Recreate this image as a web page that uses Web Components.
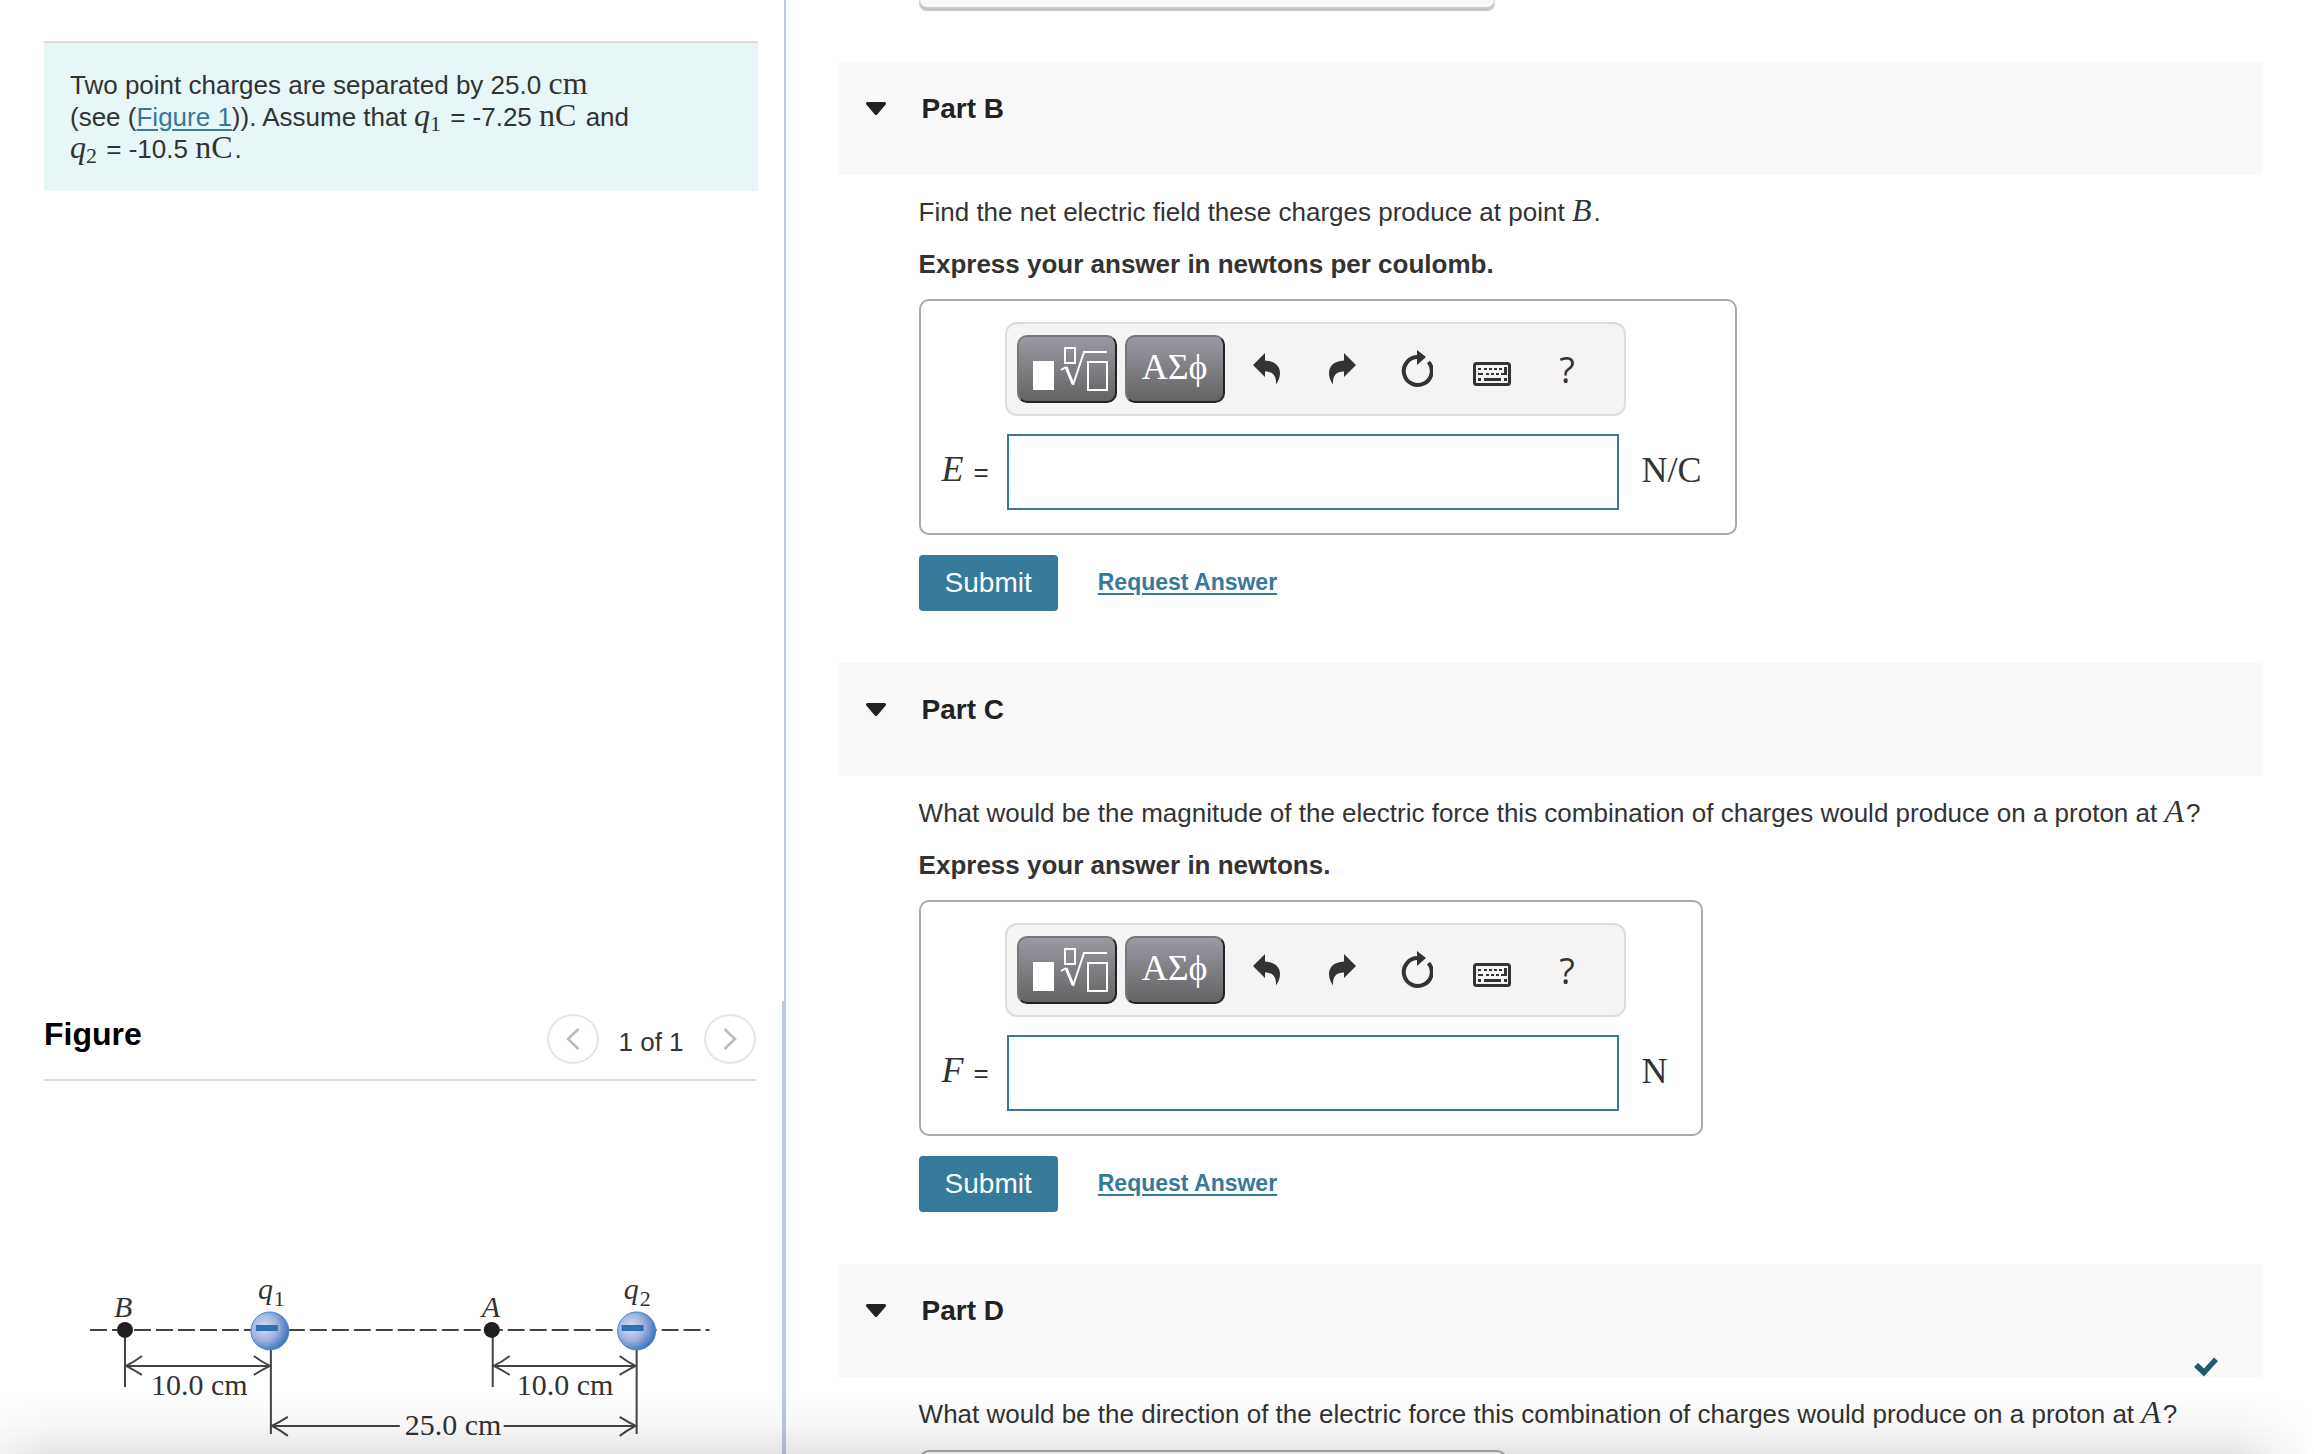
<!DOCTYPE html>
<html lang="en">
<head>
<meta charset="utf-8">
<title>Point charges</title>
<style>
  body {
    margin: 0;
    height: 100vh;
    overflow: hidden;
    background: #fff;
    color: #333;
    font: 26px/32px "Liberation Sans", Arial, sans-serif;
  }

  var, .unit {
    margin-right: 2px;
    font-family: "Liberation Serif", "Times New Roman", serif;
    font-size: 32px;
    line-height: 1px;
  }

  sub {
    font-size: 22px;
    font-style: normal;
    line-height: 1px;
    vertical-align: -5px;
  }

  a {
    color: #35799b;
    text-decoration-thickness: 2px;
    text-underline-offset: 3px;
  }
</style>
</head>
<body>

<problem-page>
  <problem-intro slot="intro">
    Two point charges are separated by 25.0 <span class="unit">cm</span><br>
    (see (<a href="#figure">Figure 1</a>)). Assume that <var>q<sub>1</sub></var> = -7.25 <span class="unit">nC</span> and<br>
    <var>q<sub>2</sub></var> = -10.5 <span class="unit">nC</span>.
  </problem-intro>

  <figure-panel slot="figure" id="figure" count="1 of 1">
    <span slot="title">Figure</span>
    <charge-diagram></charge-diagram>
  </figure-panel>

  <feedback-card></feedback-card>

  <problem-part>
    <span slot="title">Part B</span>
    <span slot="question">Find the net electric field these charges produce at point <var>B</var>.</span>
    <span slot="hint">Express your answer in newtons per coulomb.</span>
    <answer-box symbol="E" unit="N/C"></answer-box>
    <answer-actions></answer-actions>
  </problem-part>

  <problem-part>
    <span slot="title">Part C</span>
    <span slot="question">What would be the magnitude of the electric force this combination of charges would produce on a proton at <var>A</var>?</span>
    <span slot="hint">Express your answer in newtons.</span>
    <answer-box symbol="F" unit="N"></answer-box>
    <answer-actions></answer-actions>
  </problem-part>

  <problem-part done>
    <span slot="title">Part D</span>
    <span slot="question">What would be the direction of the electric force this combination of charges would produce on a proton at <var>A</var>?</span>
    <choice-box></choice-box>
  </problem-part>
</problem-page>

<script>
class ProblemPage extends HTMLElement {
  constructor() {
    super();
    this.attachShadow({ mode: 'open' });
    this.shadowRoot.innerHTML = `
      <style>
        :host {
          display: grid;
          grid-template-columns: 33.95% minmax(0, 1fr);
          height: 100vh;
          overflow: hidden;
        }

        aside {
          display: flex;
          flex-direction: column;
          min-height: 0;
        }

        #intro {
          flex: 1;
          padding: 41px 26px 0 44px;
          border-right: 2px solid #bccbdb;
        }

        #figure {
          padding: 0 26px 0 44px;
          border-right: 4px solid #bccbdb;
        }

        main {
          padding: 0 52px;
          min-height: 0;
        }

        /* shade that rises from the lower edge of the window */
        #shade {
          position: fixed;
          left: 0;
          right: 0;
          bottom: 0;
          height: 60px;
          background: linear-gradient(transparent, rgba(0, 0, 0, 0.03) 50%, rgba(0, 0, 0, 0.1));
          -webkit-mask-image: linear-gradient(90deg, rgba(0, 0, 0, 0.5), #000 50px, #000 calc(100% - 80px), transparent);
          mask-image: linear-gradient(90deg, rgba(0, 0, 0, 0.5), #000 50px, #000 calc(100% - 80px), transparent);
          pointer-events: none;
        }
      </style>
      <aside>
        <div id="intro"><slot name="intro"></slot></div>
        <div id="figure"><slot name="figure"></slot></div>
      </aside>
      <main><slot></slot></main>
      <div id="shade"></div>
    `;
  }
}

class ProblemIntro extends HTMLElement {
  constructor() {
    super();
    this.attachShadow({ mode: 'open' });
    this.shadowRoot.innerHTML = `
      <style>
        :host {
          display: block;
          padding: 26px;
          border-top: 2px solid #ddd;
          background: #e7f6f7;
        }
      </style>
      <slot></slot>
    `;
  }
}

class FigurePanel extends HTMLElement {
  constructor() {
    super();
    this.attachShadow({ mode: 'open' });
    this.shadowRoot.innerHTML = `
      <style>
        :host {
          display: block;
        }

        header {
          display: flex;
          align-items: center;
          justify-content: space-between;
          height: 78px;
          border-bottom: 2px solid #ddd;
        }

        h2 {
          margin: 0 0 12px;
          font-size: 32px;
          line-height: 36px;
          color: #000;
        }

        nav {
          display: flex;
          align-items: center;
          gap: 20px;
          margin-bottom: 2px;
        }

        nav span {
          padding-top: 6px;
        }

        button {
          display: flex;
          align-items: center;
          justify-content: center;
          width: 52px;
          height: 50px;
          padding: 0;
          border: 2px solid #e6e6e6;
          border-radius: 50%;
          background: #fff;
        }

        svg {
          fill: none;
          stroke: #bbb;
          stroke-width: 2.5;
        }
      </style>
      <header>
        <h2><slot name="title"></slot></h2>
        <nav>
          <button aria-label="Previous figure"><svg width="14" height="22"><path d="M12.5 1L2 11l10.500 10"/></svg></button>
          <span id="count"></span>
          <button aria-label="Next figure"><svg width="14" height="22"><path d="M1.500 1L12 11L1.500 21"/></svg></button>
        </nav>
      </header>
      <slot></slot>
    `;
    this.shadowRoot.querySelector('#count').textContent = this.getAttribute('count');
  }
}

class ChargeDiagram extends HTMLElement {
  constructor() {
    super();
    this.attachShadow({ mode: 'open' });
    this.shadowRoot.innerHTML = `
      <style>
        :host {
          display: block;
          padding-top: 173px;
        }

        svg {
          display: block;
          width: 100%;
          height: auto;
        }

        text {
          font-family: "Liberation Serif", "Times New Roman", serif;
          font-size: 30px;
          fill: #333;
        }

        .var {
          font-style: italic;
        }

        .sub {
          font-size: 22px;
        }

        .line {
          fill: none;
          stroke: #444;
          stroke-width: 2;
        }
      </style>
      <svg viewBox="0 0 712 200" role="img" aria-label="Charges q1 and q2 on a line with points B and A">
        <defs>
          <radialGradient id="ball" cx="0.35" cy="0.4" r="0.7">
            <stop offset="0" stop-color="#d9dff2"/>
            <stop offset="0.5" stop-color="#9fb2de"/>
            <stop offset="1" stop-color="#2f6cb8"/>
          </radialGradient>
        </defs>
        <path class="line" stroke-dasharray="17 5" d="M46 76H666"/>
        <path class="line" d="M81 76V133M227 90V180M449 76V133M593 90V180"/>
        <path class="line" d="M82 112H226M98 102Q90 108 82 112Q90 116 98 121M210 102Q218 108 226 112Q218 116 210 121"/>
        <path class="line" d="M450 112H592M466 102Q458 108 450 112Q458 116 466 121M576 102Q584 108 592 112Q584 116 576 121"/>
        <path class="line" d="M228 172H356M460 172H592M244 163Q236 168 228 172Q236 176 244 182M576 163Q584 168 592 172Q584 176 576 182"/>
        <circle cx="81" cy="76" r="8" fill="#231f20"/>
        <circle cx="448" cy="76" r="8" fill="#231f20"/>
        <circle cx="226" cy="77" r="19" fill="url(#ball)" stroke="#4a86ca"/>
        <circle cx="593" cy="77" r="19" fill="url(#ball)" stroke="#4a86ca"/>
        <path fill="#2f70b4" d="M212 71h22v6h-22zM578 71h22v6h-22z"/>
        <text class="var" x="70" y="63">B</text>
        <text class="var" x="438" y="63">A</text>
        <text class="var" x="214" y="45">q</text><text class="sub" x="230" y="52">1</text>
        <text class="var" x="580" y="45">q</text><text class="sub" x="596" y="52">2</text>
        <text x="107" y="141">10.0 cm</text>
        <text x="473" y="141">10.0 cm</text>
        <text x="361" y="181">25.0 cm</text>
      </svg>
    `;
  }
}

class FeedbackCard extends HTMLElement {
  constructor() {
    super();
    this.attachShadow({ mode: 'open' });
    this.shadowRoot.innerHTML = `
      <style>
        :host {
          display: block;
          padding: 0 0 54px 81px;
        }

        div {
          box-sizing: border-box;
          width: 576px;
          height: 8px;
          border: 1px solid #ccc;
          border-top: 0;
          border-radius: 0 0 12px 12px;
          background: #f8f8f8;
          box-shadow: 0 3px 1px #c4c4c4;
        }
      </style>
      <div></div>
    `;
  }
}

class ProblemPart extends HTMLElement {
  constructor() {
    super();
    this.attachShadow({ mode: 'open' });
    this.shadowRoot.innerHTML = `
      <style>
        :host {
          display: block;
        }

        header {
          position: relative;
          display: flex;
          box-sizing: border-box;
          height: 113px;
          padding: 31px 28px;
          background: #f9f9f9;
        }

        button {
          display: flex;
          align-items: center;
          width: 56px;
          height: 30px;
          padding: 0;
          border: 0;
          background: none;
        }

        h2 {
          margin: 0;
          color: #222;
          font-size: 28px;
          line-height: 32px;
        }

        #done {
          display: none;
          position: absolute;
          right: 44px;
          bottom: 0;
        }

        :host([done]) #done {
          display: block;
        }

        #body {
          padding: 21px 0 52px 81px;
        }

        p {
          margin: 0 0 20px;
        }

        #hint {
          margin-bottom: 19px;
          font-weight: bold;
        }

        :host([done]) #hint {
          display: none;
        }
      </style>
      <header>
        <button aria-label="Collapse part"><svg width="20" height="13"><path fill="#222" d="M1.500 0h17a1.500 1.500 0 0 1 1.200 2.400l-8.500 10a1.500 1.500 0 0 1-2.400 0l-8.500-10A1.500 1.500 0 0 1 1.500 0z"/></svg></button>
        <h2><slot name="title"></slot></h2>
        <svg id="done" width="24" height="20"><path fill="#23586f" d="M0 10l4-4 6 5.500L20 0.500l4 3.500L10 19.500z"/></svg>
      </header>
      <div id="body">
        <p><slot name="question"></slot></p>
        <p id="hint"><slot name="hint"></slot></p>
        <slot></slot>
      </div>
    `;
  }
}

class MathToolbar extends HTMLElement {
  constructor() {
    super();
    this.attachShadow({ mode: 'open' });
    this.shadowRoot.innerHTML = `
      <style>
        :host {
          display: flex;
          align-items: center;
          box-sizing: border-box;
          width: 621px;
          height: 94px;
          padding: 0 10px;
          border: 2px solid #ddd;
          border-radius: 12px;
          background: #f4f4f4;
        }

        button {
          display: flex;
          align-items: center;
          justify-content: center;
          width: 75px;
          height: 68px;
          padding: 0;
          border: 0;
          background: none;
          color: #333;
          fill: #333;
        }

        .palette {
          box-sizing: border-box;
          width: 100px;
          margin-right: 8px;
          border: 2px solid;
          border-color: #777 #222 #222 #777;
          border-radius: 10px;
          background: linear-gradient(#9b99a3, #636363);
          color: #fff;
          font: 36px "Liberation Serif", "Times New Roman", serif;
        }

        .palette + .palette {
          margin-right: 5px;
          padding-bottom: 4px;
        }

        .help {
          font: 36px "Open Sans", sans-serif;
        }
      </style>
      <button class="palette" aria-label="Templates">
        <svg width="96" height="64" fill="none" stroke="#fff" stroke-width="2">
          <path fill="#fff" stroke="none" d="M14 24h21v29h-21z"/>
          <path d="M46 11h10v15h-10zM69 25h19v28h-19z"/>
          <path d="M42 33l5-3"/>
          <path stroke-width="3" d="M47 30l7 17"/>
          <path d="M54 48L65 15H88"/>
        </svg>
      </button>
      <button class="palette" aria-label="Symbols">ΑΣϕ</button>
      <button aria-label="Undo"><svg width="28" height="32"><path d="M0 12L12 0v7.500C22 8 27 13 27 20c0 4-1.500 8-4 11.500 0.500-9-3-13-11-13V24z"/></svg></button>
      <button aria-label="Redo"><svg width="28" height="32"><path d="M28 12L16 0v7.500C6 8 1 13 1 20c0 4 1.500 8 4 11.500-0.500-9 3-13 11-13V24z"/></svg></button>
      <button aria-label="Reset"><svg width="32" height="38"><path fill="none" stroke="#333" stroke-width="4" d="M17 7A14 14 0 1 0 27.500 12"/><path d="M16 0l9 7-9 8z"/></svg></button>
      <button aria-label="Keyboard shortcuts">
        <svg width="38" height="34">
          <rect x="1.500" y="11.500" width="35" height="21" rx="2" fill="none" stroke="#333" stroke-width="3"/>
          <path d="M5 16h3v2h-3zM11 16h3v2h-3zM16 16h3v2h-3zM21 16h3v2h-3zM26 16h3v2h-3zM31 15h3v8h-6v-2h3zM5 21h5v2h-5zM13 21h3v2h-3zM18 21h3v2h-3zM23 21h3v2h-3zM5 26h3v3h-3zM11 26h17v3h-17zM31 26h3v3h-3z"/>
        </svg>
      </button>
      <button class="help" aria-label="Help">?</button>
    `;
  }
}

class AnswerBox extends HTMLElement {
  constructor() {
    super();
    this.attachShadow({ mode: 'open' });
    this.shadowRoot.innerHTML = `
      <style>
        :host {
          display: grid;
          grid-template-columns: 63px auto auto;
          row-gap: 18px;
          align-items: center;
          box-sizing: border-box;
          width: fit-content;
          padding: 21px 33px 23px 21px;
          border: 2px solid #aaa;
          border-radius: 10px;
        }

        math-toolbar {
          grid-column: 2;
        }

        label {
          display: flex;
          grid-column: 1;
          align-items: baseline;
          gap: 10px;
          padding-bottom: 4px;
        }

        i, #unit {
          font-family: "Liberation Serif", "Times New Roman", serif;
          font-size: 36px;
        }

        input {
          box-sizing: border-box;
          width: 612px;
          height: 76px;
          margin-left: 2px;
          padding: 0 12px;
          border: 2px solid #35799b;
          background: #fff;
          font: inherit;
        }

        #unit {
          margin-left: 16px;
          padding-bottom: 4px;
        }
      </style>
      <math-toolbar></math-toolbar>
      <label for="answer"><i></i><span>=</span></label>
      <input id="answer" type="text">
      <span id="unit"></span>
    `;
    this.shadowRoot.querySelector('i').textContent = this.getAttribute('symbol');
    this.shadowRoot.querySelector('#unit').textContent = this.getAttribute('unit');
  }
}

class AnswerActions extends HTMLElement {
  constructor() {
    super();
    this.attachShadow({ mode: 'open' });
    this.shadowRoot.innerHTML = `
      <style>
        :host {
          display: flex;
          align-items: center;
          gap: 40px;
          margin-top: 20px;
        }

        button {
          height: 56px;
          padding: 0 26px;
          border: 0;
          border-radius: 4px;
          background: #35799b;
          color: #fff;
          font: inherit;
          font-size: 28px;
        }

        a {
          padding-bottom: 2px;
          color: #35799b;
          font-size: 23px;
          font-weight: bold;
          text-decoration-thickness: 2px;
          text-underline-offset: 3px;
        }
      </style>
      <button>Submit</button>
      <a href="#answer">Request Answer</a>
    `;
  }
}

class ChoiceBox extends HTMLElement {
  constructor() {
    super();
    this.attachShadow({ mode: 'open' });
    this.shadowRoot.innerHTML = `
      <style>
        :host {
          display: block;
          box-sizing: border-box;
          width: 588px;
          height: 120px;
          border: 2px solid #aaa;
          border-radius: 10px;
        }
      </style>
      <slot></slot>
    `;
  }
}

customElements.define('problem-page', ProblemPage);
customElements.define('problem-intro', ProblemIntro);
customElements.define('figure-panel', FigurePanel);
customElements.define('charge-diagram', ChargeDiagram);
customElements.define('feedback-card', FeedbackCard);
customElements.define('problem-part', ProblemPart);
customElements.define('math-toolbar', MathToolbar);
customElements.define('answer-box', AnswerBox);
customElements.define('answer-actions', AnswerActions);
customElements.define('choice-box', ChoiceBox);
</script>
</body>
</html>
